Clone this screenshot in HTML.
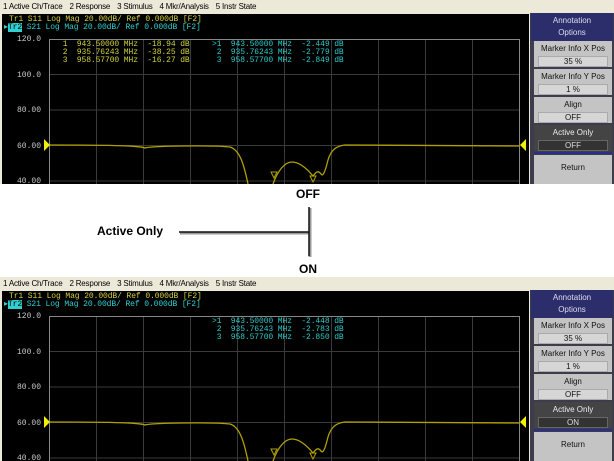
<html><head><style>
body{margin:0;width:614px;height:460px;background:#fff;position:relative;overflow:hidden;font-family:"Liberation Sans",sans-serif}
.scr{position:absolute;left:0;width:614px;height:184px;background:#ece9d8;overflow:hidden}
.menu{position:absolute;left:0;top:0;height:13px;width:614px;font-size:8px;line-height:13px;color:#000;letter-spacing:-0.2px}
.menu span{margin-left:3px;margin-right:4px}
.blk{position:absolute;left:2px;top:14px;width:527px;height:170px;background:#000}
.m{position:absolute;font-family:"Liberation Mono",monospace;font-size:8px;line-height:8px;white-space:pre;letter-spacing:-0.1px}
.panel{position:absolute;left:530px;top:13px;width:84px;height:171px;background:#3c3c4c}
.hdr{position:absolute;left:1px;top:0;width:82px;height:28px;background:#2c2e6c;color:#dde;font-size:8px;text-align:center;line-height:12px;padding-top:2px;box-sizing:border-box}
.btn{position:absolute;left:4px;width:78px;height:26px;background:#c4c4c4;color:#111;font-size:8px;text-align:center;line-height:11px;padding-top:2px;box-sizing:border-box}
.btn i{display:block;font-style:normal;margin:2px 4px 0;background:#d6d6d6;border:1px solid #aaa;height:9px;line-height:9px}
.act{background:#444;color:#eee}.act i{background:#333;border-color:#666;color:#ddd}
.lbl{position:absolute;font-weight:bold;font-size:12px;color:#000}
</style></head><body>

<div class="scr" style="top:0">
<div class="menu"><span>1 Active Ch/Trace</span><span>2 Response</span><span>3 Stimulus</span><span>4 Mkr/Analysis</span><span>5 Instr State</span></div>
<div class="blk"></div>
<div class="m" style="left:9px;top:16px;color:#d0d040">Tr1 S11 Log Mag 20.00dB/ Ref 0.000dB [F2]</div>
<div class="m" style="left:4px;top:24px;color:#30d0d0"><span>▸</span><span style="background:#30d0d0;color:#000">Tr2</span> S21 Log Mag 20.00dB/ Ref 0.000dB [F2]</div>
<svg style="position:absolute;left:0;top:0" width="530" height="184">
<g stroke="#3a3a3a" stroke-width="1">
<path d="M96.5 39V184M143.5 39V184M190.5 39V184M237.5 39V184M284.5 39V184M331.5 39V184M378.5 39V184M425.5 39V184M472.5 39V184M49 74.5H520M49 110H520M49 145.5H520M49 181H520"/></g>
<rect x="49.5" y="39.5" width="470" height="150" fill="none" stroke="#888"/>
<g font-family="Liberation Mono" font-size="8" fill="#c8c8c8" text-anchor="end"><text x="41" y="41">120.0</text><text x="41" y="77">100.0</text><text x="41" y="112">80.00</text><text x="41" y="148">60.00</text><text x="41" y="183">40.00</text></g>
<path d="M49 145C120 145 140 146 145 148C150 146 210 145 230 147C240 150 244 165 248 184M273 184C278 170 285 162 292 162C300 162 308 170 313 176C316 172 318 170 321 174C323 177 325 172 328 160C331 150 336 146 345 145L520 146" fill="none" stroke="#b0a000" stroke-width="1.3"/>
<path d="M44 139L50 145L44 151Z M526 139L520 145L526 151Z" fill="#f0f000"/>
<path d="M271 172h6l-3 6zM310 176h6l-3 6z" fill="none" stroke="#b0a000"/>
</svg>
<div class="m" style="left:58px;top:41px;color:#d0d040"> 1  943.50000 MHz  -18.94 dB
 2  935.76243 MHz  -38.25 dB
 3  958.57700 MHz  -16.27 dB</div>
<div class="m" style="left:212px;top:41px;color:#30c8c8">>1  943.50000 MHz  -2.449 dB
 2  935.76243 MHz  -2.779 dB
 3  958.57700 MHz  -2.849 dB</div>
<div class="panel"><div class="hdr">Annotation<br>Options</div>
<div class="btn" style="top:28px">Marker Info X Pos<i>35 %</i></div>
<div class="btn" style="top:56px">Marker Info Y Pos<i>1 %</i></div>
<div class="btn" style="top:84px">Align<i>OFF</i></div>
<div class="btn act" style="top:112px">Active Only<i>OFF</i></div>
<div style="position:absolute;left:4px;top:139px;width:78px;height:2px;background:#2c2e8c"></div>
<div class="btn" style="top:142px;height:29px;line-height:26px;padding:0">Return</div></div>
</div>

<div class="scr" style="top:277px">
<div class="menu"><span>1 Active Ch/Trace</span><span>2 Response</span><span>3 Stimulus</span><span>4 Mkr/Analysis</span><span>5 Instr State</span></div>
<div class="blk"></div>
<div class="m" style="left:9px;top:16px;color:#d0d040">Tr1 S11 Log Mag 20.00dB/ Ref 0.000dB [F2]</div>
<div class="m" style="left:4px;top:24px;color:#30d0d0"><span>▸</span><span style="background:#30d0d0;color:#000">Tr2</span> S21 Log Mag 20.00dB/ Ref 0.000dB [F2]</div>
<svg style="position:absolute;left:0;top:0" width="530" height="184">
<g stroke="#3a3a3a" stroke-width="1">
<path d="M96.5 39V184M143.5 39V184M190.5 39V184M237.5 39V184M284.5 39V184M331.5 39V184M378.5 39V184M425.5 39V184M472.5 39V184M49 74.5H520M49 110H520M49 145.5H520M49 181H520"/></g>
<rect x="49.5" y="39.5" width="470" height="150" fill="none" stroke="#888"/>
<g font-family="Liberation Mono" font-size="8" fill="#c8c8c8" text-anchor="end"><text x="41" y="41">120.0</text><text x="41" y="77">100.0</text><text x="41" y="112">80.00</text><text x="41" y="148">60.00</text><text x="41" y="183">40.00</text></g>
<path d="M49 145C120 145 140 146 145 148C150 146 210 145 230 147C240 150 244 165 248 184M273 184C278 170 285 162 292 162C300 162 308 170 313 176C316 172 318 170 321 174C323 177 325 172 328 160C331 150 336 146 345 145L520 146" fill="none" stroke="#b0a000" stroke-width="1.3"/>
<path d="M44 139L50 145L44 151Z M526 139L520 145L526 151Z" fill="#f0f000"/>
<path d="M271 172h6l-3 6zM310 176h6l-3 6z" fill="none" stroke="#b0a000"/>
</svg>
<div class="m" style="left:212px;top:41px;color:#30c8c8">>1  943.50000 MHz  -2.448 dB
 2  935.76243 MHz  -2.783 dB
 3  958.57700 MHz  -2.850 dB</div>
<div class="panel"><div class="hdr">Annotation<br>Options</div>
<div class="btn" style="top:28px">Marker Info X Pos<i>35 %</i></div>
<div class="btn" style="top:56px">Marker Info Y Pos<i>1 %</i></div>
<div class="btn" style="top:84px">Align<i>OFF</i></div>
<div class="btn act" style="top:112px">Active Only<i>ON</i></div>
<div style="position:absolute;left:4px;top:139px;width:78px;height:2px;background:#2c2e8c"></div>
<div class="btn" style="top:142px;height:29px;line-height:26px;padding:0">Return</div></div>
</div>

<div class="lbl" style="left:296px;top:187px">OFF</div>
<div class="lbl" style="left:97px;top:224px">Active Only</div>
<div class="lbl" style="left:299px;top:262px">ON</div>
<svg style="position:absolute;left:0;top:0" width="614" height="460">
<path d="M179 232H309M309 207V256" stroke="#999" stroke-width="3" transform="translate(1,1)"/>
<path d="M179 232H309M309 207V256" stroke="#111" stroke-width="1.5"/>
</svg>
</body></html>
